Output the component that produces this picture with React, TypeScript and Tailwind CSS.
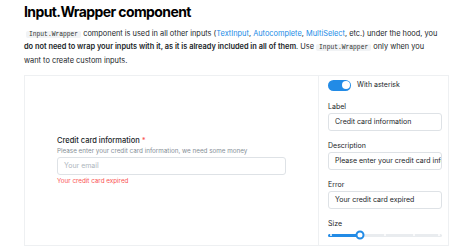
import React from 'react'

const sans = "font-['Inter','Noto_Sans',sans-serif]"

function Code({ children }: { children: React.ReactNode }) {
  return (
    <code className="rounded-[2px] bg-[#f1f3f5] px-[3px] font-['Liberation_Mono',monospace] text-[6.3px] text-[#333]">
      {children}
    </code>
  )
}

function A({ children }: { children: React.ReactNode }) {
  return <span className="text-[#228be6]">{children}</span>
}

function Field({ label, value }: { label: string; value: string }) {
  return (
    <div className="flex flex-col">
      <div className="h-[13px] text-[7px] leading-[13px] text-[#212529]">{label}</div>
      <div className="flex h-[18px] items-center overflow-hidden whitespace-nowrap rounded-[3px] border border-[#dee2e6] px-[6px] text-[7px] text-[#212529]">
        {value}
      </div>
    </div>
  )
}

export default function App() {
  const marks = [0, 25, 50, 75, 100]
  return (
    <div className={`h-[248px] w-[474px] overflow-hidden bg-white pl-[24px] ${sans}`}>
      <h1 className="pt-[2px] text-[14px] font-bold leading-[20px] tracking-[-0.6px] text-[#000]">
        Input.Wrapper component
      </h1>

      <div className="mt-[6px] text-[7.4px] leading-[12.3px] text-[#212529]">
        <div className="whitespace-nowrap pl-[2px]">
          <Code>Input.Wrapper</Code> component is used in all other inputs (<A>TextInput</A>, <A>Autocomplete</A>,{' '}
          <A>MultiSelect</A>, etc.) under the hood, you
        </div>
        <div className="whitespace-nowrap">
          <b className="font-semibold">do not need to wrap your inputs with it, as it is already included in all of them</b>.
          Use <Code>Input.Wrapper</Code> only when you
        </div>
        <div className="whitespace-nowrap">want to create custom inputs.</div>
      </div>

      <div className="mt-[8px] flex h-[171px] w-[425px] border border-[#eef0f2]">
        <div className="flex flex-1 flex-col justify-center px-[32px] pt-[2px]">
          <div className="text-[7.5px] font-medium leading-[11px] text-[#212529]">
            Credit card information <span className="text-[#fa5252]">*</span>
          </div>
          <div className="text-[6.3px] leading-[10px] text-[#868e96]">
            Please enter your credit card information, we need some money
          </div>
          <div className="mt-[1px] flex h-[18px] items-center rounded-[3px] border border-[#dee2e6] px-[6px] text-[7px] text-[#adb5bd]">
            Your email
          </div>
          <div className="mt-[1px] text-[6.3px] leading-[11px] text-[#fa5252]">Your credit card expired</div>
        </div>

        <div className="flex w-[130px] flex-col gap-[2px] border-l border-[#eef0f2] pl-[9px] pr-[6px] pt-[4px]">
          <div className="flex items-center gap-[6px]">
            <div className="flex h-[11px] w-[23px] items-center justify-end rounded-full bg-[#228be6] px-[1.5px]">
              <div className="h-[8px] w-[8px] rounded-full bg-white" />
            </div>
            <span className="text-[7px] text-[#212529]">With asterisk</span>
          </div>
          <div className="mt-[7px] flex flex-col gap-[8px]">
            <Field label="Label" value="Credit card information" />
            <Field label="Description" value="Please enter your credit card information, we need some money" />
            <Field label="Error" value="Your credit card expired" />
            <div className="flex flex-col">
              <div className="h-[13px] text-[7px] leading-[13px] text-[#212529]">Size</div>
              <div className="relative mt-[4px] h-[3px] rounded-full bg-[#e9ecef]">
                <div className="h-full w-[28%] rounded-full bg-[#228be6]" />
                {marks.map((m) => (
                  <div
                    key={m}
                    className="absolute top-[0.5px] h-[2px] w-[2px] -translate-x-1/2 rounded-full bg-white"
                    style={{ left: `calc(${m}% ${m === 0 ? '+ 3px' : m === 100 ? '- 3px' : ''})` }}
                  />
                ))}
                <div className="absolute left-[28%] top-1/2 h-[9px] w-[9px] -translate-x-1/2 -translate-y-1/2 rounded-full border-[2px] border-[#228be6] bg-white" />
              </div>
            </div>
          </div>
        </div>
      </div>
    </div>
  )
}
